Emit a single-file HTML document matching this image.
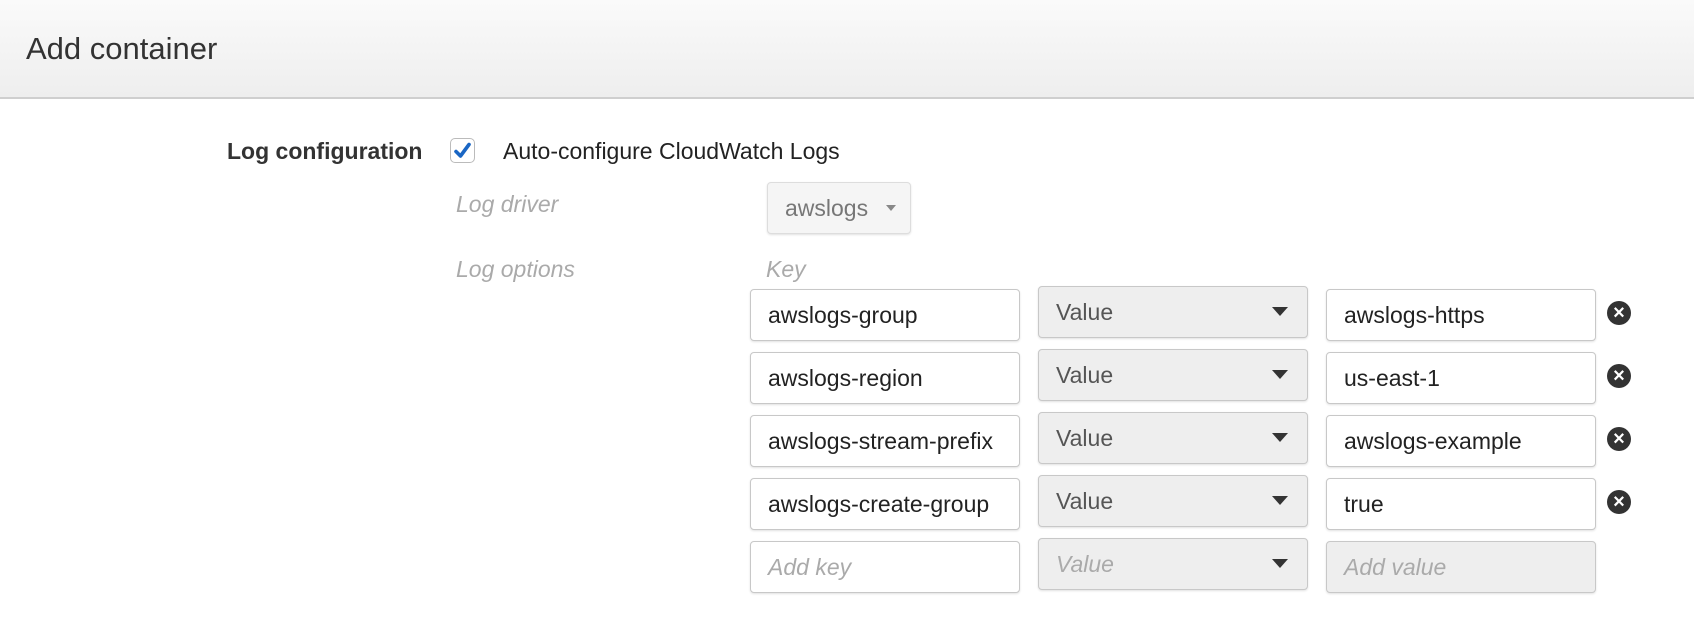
<!DOCTYPE html>
<html><head><meta charset="utf-8"><style>
*{box-sizing:border-box;margin:0;padding:0}
body{width:1694px;height:624px;background:#fff;font-family:"Liberation Sans",Arial,sans-serif;position:relative;overflow:hidden;color:#222}
.hdr{position:absolute;left:0;top:0;width:1694px;height:99px;background:linear-gradient(#fafafa,#eeeeee);border-bottom:2px solid #cfcfcf}
.hdr span{position:absolute;left:26px;top:31px;font-size:31px;color:#333}
.abs{position:absolute;white-space:nowrap}
.lbl{left:227px;top:138px;font-size:23px;font-weight:bold;color:#333}
.cb{left:450px;top:138px;width:25px;height:25px;border:1px solid #bbb;border-radius:5px;background:#fff}
.auto{left:503px;top:138px;font-size:23px;color:#222}
.gi{font-style:italic;color:#aaa;font-size:23px}
.box{position:absolute;height:52px;border:1px solid #c8c8c8;border-radius:4px;box-shadow:0 1px 2px rgba(0,0,0,.12);font-size:23px;padding-left:17px;line-height:50px;color:#222;white-space:nowrap}
.k{left:750px;width:270px;background:#fff}
.s{left:1038px;width:270px;background:#eeeeee;color:#555;margin-top:-3px}
.v{left:1326px;width:270px;background:#fff}
.car{position:absolute;right:19px;top:20px;width:0;height:0;border-left:8px solid transparent;border-right:8px solid transparent;border-top:9px solid #333}
.x{position:absolute;left:1607px;width:24px;height:24px;border-radius:50%;background:#333;color:#fff;font-size:20px;line-height:24px;text-align:center;font-weight:bold}
.ph{color:#aaa;font-style:italic}
</style></head><body>
<div class="hdr"><span>Add container</span></div>
<div class="abs lbl">Log configuration</div>
<div class="abs cb"><svg width="23" height="23" viewBox="0 0 23 23"><path d="M5 12.5l4.5 4.5L18 5.5" fill="none" stroke="#1a66c4" stroke-width="3.6" stroke-linecap="round" stroke-linejoin="round"/></svg></div>
<div class="abs auto">Auto-configure CloudWatch Logs</div>
<div class="abs gi" style="left:456px;top:191px">Log driver</div>
<div class="box" style="left:767px;top:182px;width:144px;background:#f5f5f5;color:#777;border-color:#ddd">awslogs<div class="car" style="right:14px;border-top-color:#888;border-left-width:5px;border-right-width:5px;border-top-width:6px;top:22px"></div></div>
<div class="abs gi" style="left:456px;top:256px">Log options</div>
<div class="abs gi" style="left:766px;top:256px">Key</div>

<div class="box k" style="top:289px">awslogs-group</div>
<div class="box s" style="top:289px">Value<div class="car"></div></div>
<div class="box v" style="top:289px">awslogs-https</div>
<div class="x" style="top:301px">×</div>

<div class="box k" style="top:352px">awslogs-region</div>
<div class="box s" style="top:352px">Value<div class="car"></div></div>
<div class="box v" style="top:352px">us-east-1</div>
<div class="x" style="top:364px">×</div>

<div class="box k" style="top:415px">awslogs-stream-prefix</div>
<div class="box s" style="top:415px">Value<div class="car"></div></div>
<div class="box v" style="top:415px">awslogs-example</div>
<div class="x" style="top:427px">×</div>

<div class="box k" style="top:478px">awslogs-create-group</div>
<div class="box s" style="top:478px">Value<div class="car"></div></div>
<div class="box v" style="top:478px">true</div>
<div class="x" style="top:490px">×</div>

<div class="box k ph" style="top:541px">Add key</div>
<div class="box s ph" style="top:541px;color:#aaa">Value<div class="car"></div></div>
<div class="box v ph" style="top:541px;background:#eeeeee">Add value</div>
</body></html>
